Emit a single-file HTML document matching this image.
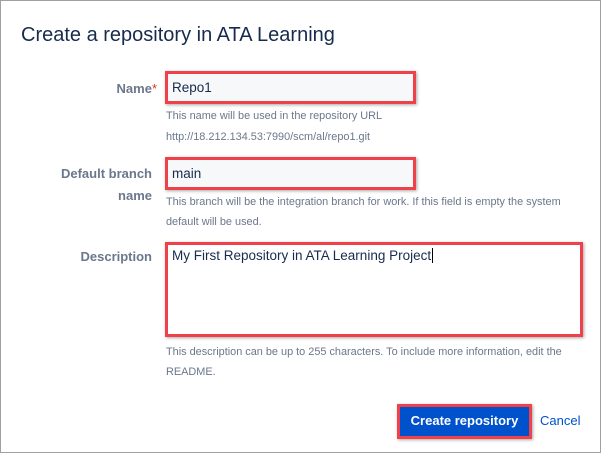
<!DOCTYPE html>
<html><head><style>
body{margin:0;width:601px;height:453px;overflow:hidden;background:#fff;font-family:"Liberation Sans",sans-serif;}
.frame{position:absolute;left:0;top:0;width:599px;height:451px;border:1px solid #a0a0a0;}
.a{position:absolute;white-space:nowrap;}
.t{left:21px;top:24px;font-size:20px;color:#172b4d;}
.lbl{font-size:13px;font-weight:bold;color:#6b778c;text-align:right;}
.box{position:absolute;border:3px solid #f0404a;box-shadow:1px 1px 3px rgba(0,0,0,.35);background:#f7f8f9;box-sizing:border-box;}
.in{font-size:13.5px;color:#172b4d;}
.h{font-size:10.9px;color:#6b778c;}
</style></head><body>
<div class="frame"></div>
<div class="a t">Create a repository in ATA Learning</div>

<div class="a lbl" style="right:444px;top:81px">Name<span style="color:#de350b;font-weight:normal">*</span></div>
<div class="box" style="left:165px;top:71px;width:251px;height:33px"></div>
<div class="a in" style="left:172px;top:80px">Repo1</div>
<div class="a h" style="left:166px;top:110px">This name will be used in the repository URL</div>
<div class="a h" style="left:166px;top:131px">http://18.212.134.53:7990/scm/al/repo1.git</div>

<div class="a lbl" style="right:449px;top:163px;line-height:22px">Default branch<br>name</div>
<div class="box" style="left:165px;top:157px;width:251px;height:33px"></div>
<div class="a in" style="left:172px;top:166px">main</div>
<div class="a h" style="left:166px;top:196px">This branch will be the integration branch for work. If this field is empty the system</div>
<div class="a h" style="left:166px;top:216px">default will be used.</div>

<div class="a lbl" style="right:449px;top:249px">Description</div>
<div class="box" style="left:165px;top:242px;width:418px;height:95px;background:#fff"></div>
<div class="a in" style="left:172px;top:248px">My First Repository in ATA Learning Project<span style="border-left:1px solid #000;margin-left:1px"></span></div>
<div class="a h" style="left:166px;top:346px">This description can be up to 255 characters. To include more information, edit the</div>
<div class="a h" style="left:166px;top:366px">README.</div>

<div class="box" style="left:397px;top:404px;width:135px;height:35px;background:#0052cc;border-color:#f0404a"></div>
<div class="a" style="left:397px;top:413px;width:135px;text-align:center;color:#fff;font-weight:bold;font-size:13px">Create repository</div>
<div class="a" style="left:540px;top:413px;color:#0052cc;font-size:13px">Cancel</div>
</body></html>
